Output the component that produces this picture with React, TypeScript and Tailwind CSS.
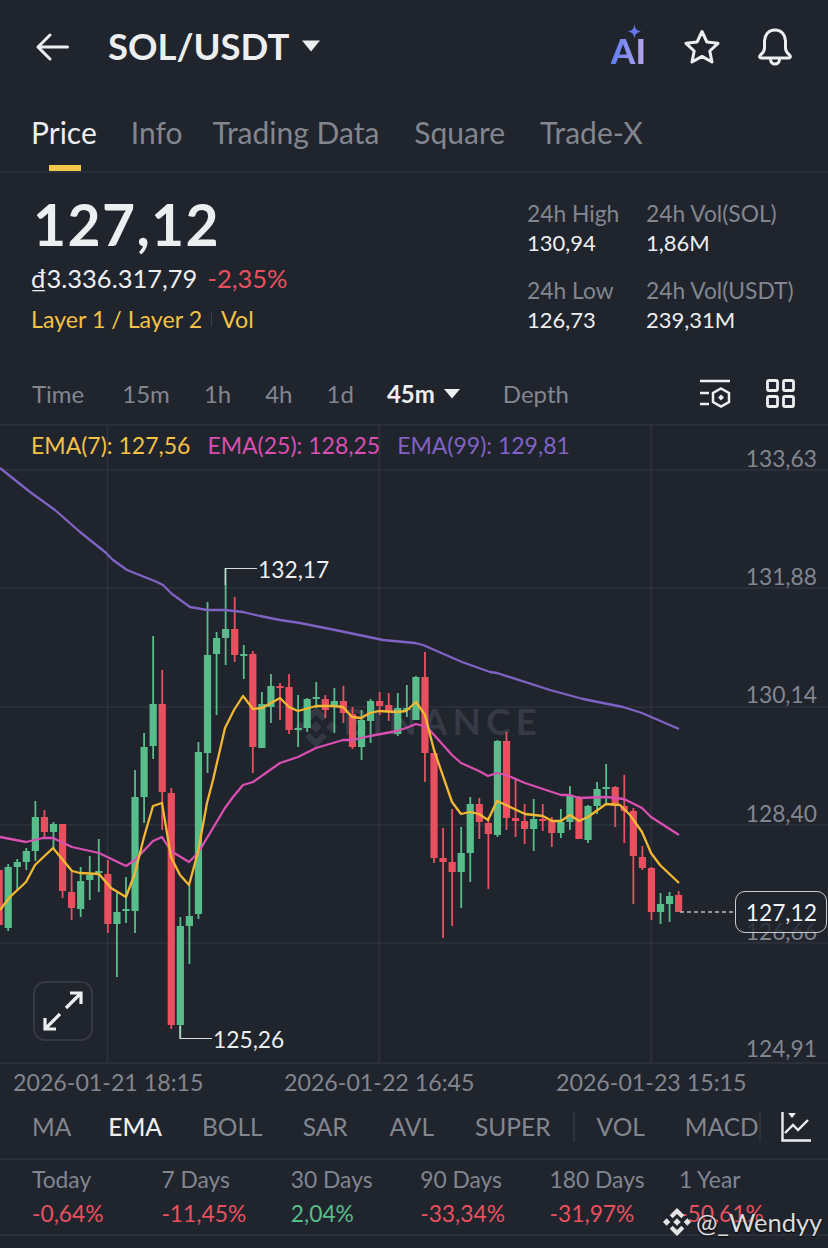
import React from "react";

const X = (i: number) => 8.2 + 9.06 * i;
// [index, high, bodyTop, bodyBottom, low, green?]
const c: [number, number, number, number, number, number][] = [
[-1,862,870,925,930,0],[0,864,867,928,931,1],[1,859,862,867,890,1],[2,848,851,862,870,1],[3,801,817,851,861,1],[4,810,817,832,838,0],[5,822,824,832,848,1],[6,824,824,891,898,0],[7,872,892,908,920,0],[8,867,881,909,917,1],[9,856,875,880,900,1],[10,839,871,873,892,1],[11,860,874,924,933,0],[12,893,912,924,977,1],[13,877,909,911,923,1],[14,770,797,911,933,1],[15,733,747,797,823,1],[16,636,704,746,759,1],[17,670,704,792,830,0],[18,788,793,1025,1029,0],[19,917,926,1025,1038,1],[20,885,916,926,964,1],[21,742,752,914,919,1],[22,602,655,753,773,1],[23,632,638,654,715,1],[24,568,629,638,665,1],[25,597,629,655,662,0],[26,645,654,656,679,1],[27,651,654,747,773,0],[28,692,704,748,748,1],[29,674,686,707,723,1],[30,683,686,688,720,0],[31,674,687,730,734,0],[32,695,728,730,747,1],[33,698,699,728,732,1],[34,682,697,699,708,1],[35,695,699,710,718,0],[36,688,701,707,733,1],[37,686,701,713,723,0],[38,707,714,747,749,0],[39,710,720,747,760,1],[40,699,701,721,743,1],[41,692,701,706,715,0],[42,693,705,712,721,0],[43,693,708,734,736,1],[44,685,708,710,717,1],[45,676,677,720,720,1],[46,652,677,753,782,0],[47,753,753,858,863,0],[48,828,858,862,938,0],[49,809,862,872,926,0],[50,827,853,872,908,1],[51,797,804,853,882,1],[52,798,804,822,839,0],[53,817,823,834,889,0],[54,740,741,835,837,1],[55,732,741,818,830,0],[56,780,818,821,837,0],[57,804,821,829,844,0],[58,799,819,829,851,1],[59,804,819,821,831,0],[60,817,821,833,847,0],[61,809,822,833,838,1],[62,786,796,822,830,1],[63,796,797,839,839,0],[64,805,806,840,843,1],[65,782,789,806,814,1],[66,764,787,789,805,1],[67,786,787,806,827,0],[68,775,806,811,843,0],[69,808,811,856,904,0],[70,846,857,868,870,0],[71,867,868,912,920,0],[72,893,904,912,924,1],[73,892,896,904,922,1],[74,891,895,912,912,0]];

const yellow = "0,910 10,897 26,882 35,865 53,848 72,871 80,873 99,874 111,888 126,897 135,873 144,837 153,806 162,803 171,857 180,875 189,885 198,852 207,803 213,780 225,728 234,710 243,696 253,709 262,708 271,703 280,698 289,707 298,711 316,706 334,706 343,707 352,717 361,718 370,713 379,711 397,712 406,711 416,702 425,715 434,750 452,802 461,814 470,812 479,814 488,820 497,801 506,805 525,814 543,816 552,821 561,821 570,815 579,821 588,817 606,804 620,805 630,815 642,832 651,853 660,865 679,883";
const pink = "0,837 26,842 43,838 53,838 72,847 99,853 126,866 135,860 153,841 162,837 171,851 189,862 198,853 225,808 233,797 243,785 253,782 280,763 298,757 316,748 343,740 352,740 370,736 397,731 406,728 416,724 427,727 452,755 461,763 479,771 488,776 497,773 506,775 525,783 543,789 561,795 570,795 579,798 606,797 624,799 642,808 651,817 679,835";
const purple = "0,468 30,492 55,510 80,532 105,552 113,560 127,570 157,582 163,585 172,594 190,607 207,610 225,610 243,612 260,616 280,620 300,623 340,631 383,640 415,643 423,645 462,662 490,672 497,673 550,690 583,699 623,707 642,713 679,729";

const Diamond = ({ cx, cy, s, fill }: { cx: number; cy: number; s: number; fill: string }) => {
  const p = (pts: number[][]) => pts.map(([a, b]) => `${cx + a * s},${cy + b * s}`).join(" ");
  return (
    <g fill={fill}>
      <polygon points={p([[0, -1], [0.52, -0.48], [0.31, -0.27], [0, -0.58], [-0.31, -0.27], [-0.52, -0.48]])} />
      <polygon points={p([[0, 1], [0.52, 0.48], [0.31, 0.27], [0, 0.58], [-0.31, 0.27], [-0.52, 0.48]])} />
      <polygon points={p([[-1, 0], [-0.74, -0.26], [-0.48, 0], [-0.74, 0.26]])} />
      <polygon points={p([[1, 0], [0.74, -0.26], [0.48, 0], [0.74, 0.26]])} />
      <polygon points={p([[0, -0.27], [0.27, 0], [0, 0.27], [-0.27, 0]])} />
    </g>
  );
};

const Chart = () => (
  <svg viewBox="0 425 828 637" className="absolute inset-0 w-[828px] h-[637px]">
    {[470, 588, 707, 825, 943].map((y) => (
      <line key={y} x1="0" x2="828" y1={y} y2={y} stroke="#2e323c" strokeWidth="1.5" />
    ))}
    {[107.5, 379.3, 651.3].map((x) => (
      <line key={x} x1={x} x2={x} y1="425" y2="1062" stroke="#2e323c" strokeWidth="1.5" />
    ))}
    <Diamond cx={316} cy={727} s={21} fill="#343842" />
    <text x="343" y="735" fontSize="37" fontWeight="700" fill="#363a44" letterSpacing="5">BINANCE</text>
    {c.map(([i, h, t, b, l, g]) => {
      const col = g ? "#58bd8a" : "#e9505f";
      return (
        <g key={i} fill={col}>
          <rect x={X(i) - 0.9} y={h} width="1.8" height={l - h} />
          <rect x={X(i) - 3.6} y={t} width="7.2" height={b - t} />
        </g>
      );
    })}
    <polyline points={purple} fill="none" stroke="#8063c4" strokeWidth="2.300" strokeLinejoin="round" />
    <polyline points={pink} fill="none" stroke="#d94fb2" strokeWidth="2.300" strokeLinejoin="round" />
    <polyline points={yellow} fill="none" stroke="#f2b733" strokeWidth="2.300" strokeLinejoin="round" />
    <path d="M225.3 585V568.5H257" fill="none" stroke="#d8dadd" strokeWidth="1.2" />
    <path d="M180 1026V1038.5H212" fill="none" stroke="#d8dadd" strokeWidth="1.2" />
    <line x1="680" x2="735" y1="912" y2="912" stroke="#b8babf" strokeWidth="1.3" strokeDasharray="4 3" />
  </svg>
);

const axis = [
  ["133,63", "top-[19px]"],
  ["131,88", "top-[137px]"],
  ["130,14", "top-[255px]"],
  ["128,40", "top-[374px]"],
  ["126,66", "top-[492px]"],
  ["124,91", "top-[609px]"],
];

export default function App() {
  return (
    <div className="relative w-[828px] h-[1248px] overflow-hidden bg-[#20242d] font-[Lato,sans-serif] text-[#82868f]">
      {/* header */}
      <div className="flex items-center h-[94px] pl-[36px] pr-[35px]">
        <svg width="33" height="28" viewBox="0 0 33 28" fill="none" stroke="#eceef0" strokeWidth="3" strokeLinecap="round" strokeLinejoin="round">
          <path d="M31.5 14H2M14 2 2 14l12 12" />
        </svg>
        <span className="ml-[39px] -mt-[2px] text-[36.500px] font-bold text-[#eceef0] leading-none">SOL/USDT</span>
        <svg width="18" height="12" viewBox="0 0 18 12" className="ml-[13px] -mt-[3px]"><path d="M0 .5h18L9 11.500z" fill="#eceef0" /></svg>
        <div className="relative ml-auto mt-[7px] text-[35px] font-black leading-none bg-gradient-to-r from-[#5f7bf0] to-[#b9a7ee] bg-clip-text text-transparent">
          AI
          <svg width="13" height="15" viewBox="0 0 14 16" className="absolute -top-[9px] left-[17px]"><path d="M7 0c.6 5 2 7 7 8-5 1-6.400 3-7 8-.6-5-2-7-7-8 5-1 6.400-3 7-8z" fill="#6677ee" /></svg>
        </div>
        <svg width="36" height="35" viewBox="0 0 36 35" className="ml-[38px] -mt-[2px]" fill="none" stroke="#eceef0" strokeWidth="3" strokeLinejoin="round">
          <path d="m18 2.500 4.900 10.500 11.100 1.300-8.200 7.700 2.200 11-10-5.600-10 5.600 2.200-11L2 14.300 13.100 13z" />
        </svg>
        <svg width="36" height="38" viewBox="0 0 36 38" className="ml-[37px]" fill="none" stroke="#eceef0" strokeWidth="3" strokeLinejoin="round" strokeLinecap="round">
          <path d="M18 2C11 2 7.500 7.500 7.500 13v7c0 3-1.500 5-4 7-1.500 1.500-1 3 1 3h27c2 0 2.500-1.500 1-3-2.500-2-4-4-4-7v-7C28.500 7.500 25 2 18 2z" />
          <path d="M13.500 31c0 3 2 5 4.500 5s4.500-2 4.500-5" />
        </svg>
      </div>

      {/* tabs */}
      <div className="relative h-[79px] border-b-2 border-[#2b2f39]">
        <div className="flex pl-[31px] pt-[21px] text-[30px] leading-[34px]">
          <span className="text-[#eceef0]">Price</span>
          <span className="ml-[34px]">Info</span>
          <span className="ml-[30px]">Trading Data</span>
          <span className="ml-[35px]">Square</span>
          <span className="ml-[35px]">Trade-X</span>
        </div>
        <div className="absolute left-[49px] bottom-0 w-[32px] h-[6px] bg-[#f3c94b]" />
      </div>

      {/* stats */}
      <div className="flex h-[190px]">
        <div className="w-[527px] pl-[31px]">
          <div className="mt-[21px] ml-[2px] text-[57px] font-bold leading-[60px] text-[#eceef0] tracking-[1.400px]">127,12</div>
          <div className="mt-[9px] flex gap-[10px] text-[25.500px] leading-[30px]">
            <span className="text-[#eceef0]">₫3.336.317,79</span>
            <span className="text-[#e9505f]">-2,35%</span>
          </div>
          <div className="mt-[11px] flex items-center gap-[9px] text-[23.200px] leading-[30px] text-[#f3c246]">
            <span>Layer 1 / Layer 2</span>
            <span className="w-[1px] h-[14px] bg-[#3a3e48]" />
            <span>Vol</span>
          </div>
        </div>
        <div className="grid grid-cols-[119px_1fr] content-start pt-[26px] text-[22.800px] leading-[29px] gap-y-[19px]">
          <div>24h High<div className="text-[#eceef0] text-[22px]">130,94</div></div>
          <div>24h Vol(SOL)<div className="text-[#eceef0] text-[22px]">1,86M</div></div>
          <div>24h Low<div className="text-[#eceef0] text-[22px]">126,73</div></div>
          <div>24h Vol(USDT)<div className="text-[#eceef0] text-[22px]">239,31M</div></div>
        </div>
      </div>

      {/* intervals */}
      <div className="flex items-center h-[63px] pl-[32px] pr-[33px] text-[24px] border-b-2 border-[#2b2f39] box-border">
        <span>Time</span>
        <span className="ml-[38px]">15m</span>
        <span className="ml-[34px]">1h</span>
        <span className="ml-[34px]">4h</span>
        <span className="ml-[34px]">1d</span>
        <span className="ml-[33px] font-bold text-[#eceef0]">45m</span>
        <svg width="16" height="11" viewBox="0 0 16 11" className="ml-[9px]"><path d="M0 1h16L8 10.500z" fill="#eceef0" /></svg>
        <span className="ml-[43px]">Depth</span>
        <svg width="32" height="30" viewBox="0 0 32 30" className="ml-auto" fill="none" stroke="#eceef0" strokeWidth="2.500">
          <path d="M1 2h30M1 14h9M1 25h9" />
          <path d="M22 9.500 30 14v9l-8 4.500-8-4.500v-9z" />
          <path d="m22 15.500 3 3-3 3-3-3z" fill="#eceef0" stroke="none" />
        </svg>
        <svg width="29" height="29" viewBox="0 0 29 29" className="ml-[35px]" fill="none" stroke="#eceef0" strokeWidth="2.800" strokeLinejoin="round">
          <rect x="1.500" y="1.500" width="10" height="10" rx="1.500" />
          <rect x="17.500" y="1.500" width="10" height="10" rx="1.500" />
          <rect x="1.500" y="17.500" width="10" height="10" rx="1.500" />
          <rect x="17.500" y="17.500" width="10" height="10" rx="1.500" />
        </svg>
      </div>

      {/* chart */}
      <div className="relative h-[637px] border-b-2 border-[#2b2f39] box-content -mt-[1px]">
        <Chart />
        <div className="absolute left-[31px] top-[5px] flex gap-[17px] text-[23px] leading-[30px]">
          <span className="text-[#f3c246]">EMA(7): 127,56</span>
          <span className="text-[#d94fb2]">EMA(25): 128,25</span>
          <span className="text-[#8063c4]">EMA(99): 129,81</span>
        </div>
        {axis.map(([v, t]) => (
          <span key={v} className={`absolute right-[11px] text-[22.800px] leading-[28px] ${t}`}>{v}</span>
        ))}
        <span className="absolute left-[258px] top-[130px] text-[22.800px] leading-[28px] text-[#eceef0]">132,17</span>
        <span className="absolute left-[213px] top-[600px] text-[22.800px] leading-[28px] text-[#eceef0]">125,26</span>
        <div className="absolute left-[735px] top-[466px] w-[92px] h-[42px] rounded-[10px] border-[1.500px] border-[#c9cbcf] bg-[#20242d]/80 flex items-center justify-end pr-[9px] text-[22.800px] text-[#f4f5f6]">127,12</div>
        <div className="absolute left-[33px] top-[556px] w-[60px] h-[60px] rounded-[12px] border-2 border-[#343843] flex items-center justify-center">
          <svg width="42" height="42" viewBox="0 0 42 42" fill="none" stroke="#eceef0" strokeWidth="3.200">
            <path d="M24 18 39 3M28 3h11v11M18 24 3 39M3 28v11h11" />
          </svg>
        </div>
      </div>

      {/* dates */}
      <div className="flex h-[36px] items-center pl-[13px] text-[23.200px] leading-[28px] gap-[81px] whitespace-nowrap">
        <span className="w-[190px] shrink-0">2026-01-21 18:15</span>
        <span className="w-[191px] shrink-0">2026-01-22 16:45</span>
        <span className="shrink-0">2026-01-23 15:15</span>
      </div>

      {/* indicators */}
      <div className="flex items-center h-[60px] pl-[32px] pb-[4px] text-[24.500px] border-b-2 border-[#2b2f39]">
        <span>MA</span>
        <span className="ml-[37px] text-[#eceef0] font-medium">EMA</span>
        <span className="ml-[40px]">BOLL</span>
        <span className="ml-[40px]">SAR</span>
        <span className="ml-[42px]">AVL</span>
        <span className="ml-[41px]">SUPER</span>
        <span className="ml-[22px] w-[2px] h-[30px] bg-[#2e323c]" />
        <span className="ml-[22px]">VOL</span>
        <span className="ml-[40px]">MACD</span>
        <span className="w-[2px] h-[30px] bg-[#2e323c]" />
        <svg width="30" height="30" viewBox="0 0 30 30" className="ml-[20px]" fill="none" stroke="#eceef0" strokeWidth="2.400">
          <path d="M1.500 0v28.500H30" />
          <path d="m4 21 8-8 5 5 10-10" />
          <path d="M7 1h8l-4 5z" fill="#eceef0" stroke="none" />
        </svg>
      </div>

      {/* returns */}
      <div className="relative h-[76px] border-b-2 border-[#2b2f39] pl-[32px] pt-[2px] grid grid-cols-[repeat(6,129.400px)] text-[22.800px] leading-[34px]">
        {[["Today","-0,64%",0],["7 Days","-11,45%",0],["30 Days","2,04%",1],["90 Days","-33,34%",0],["180 Days","-31,97%",0],["1 Year","-50,61%",0]].map(([a,b,g]) => (
          <div key={a as string} className="whitespace-nowrap">
            {a}
            <div className={g ? "text-[#58bd8a]" : "text-[#e9505f]"}>{b}</div>
          </div>
        ))}
        <div className="absolute left-[663px] top-[47px] flex items-center gap-[5px] text-[25.500px] leading-[30px] text-[#dcdcdc] whitespace-nowrap [text-shadow:0_1px_2px_#000]">
          <svg width="28" height="28" viewBox="660 1208 28 28"><Diamond cx={674} cy={1222} s={14} fill="#e4e4e4" /></svg>
          <span>@_Wendyy</span>
        </div>
      </div>
    </div>
  );
}
